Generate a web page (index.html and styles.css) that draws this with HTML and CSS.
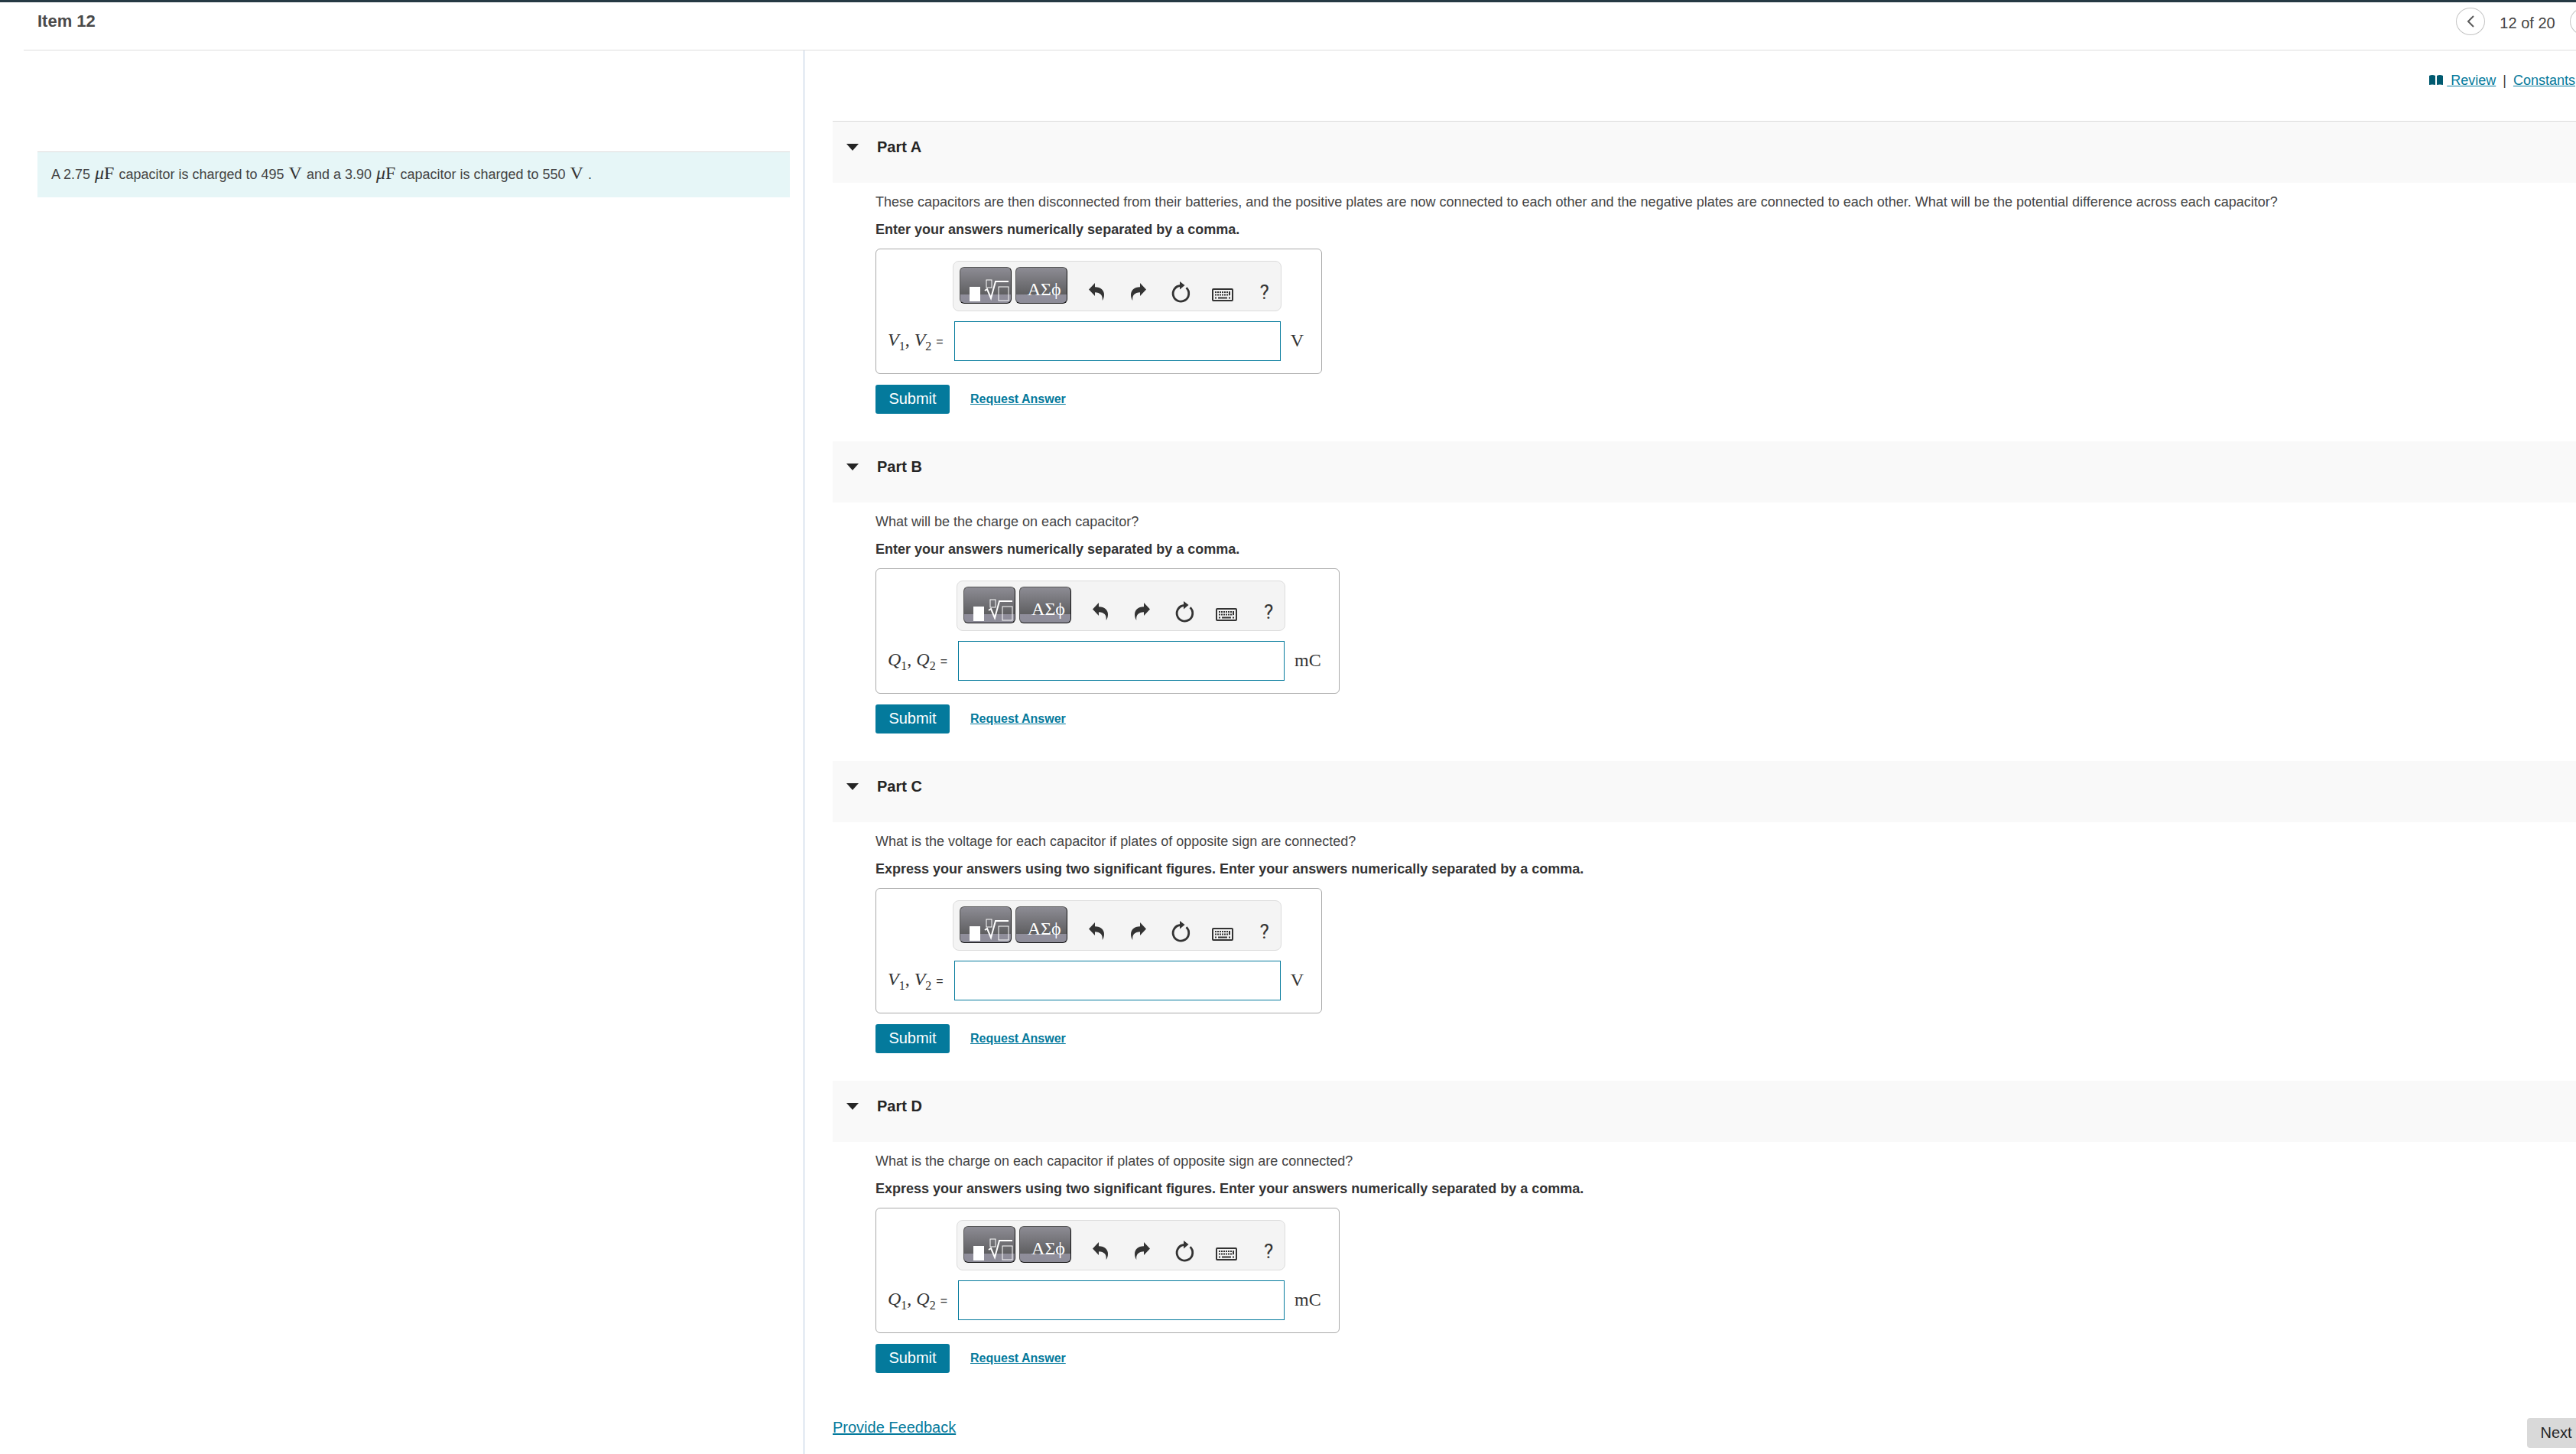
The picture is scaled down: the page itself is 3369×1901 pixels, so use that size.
FILE: index.html
```html
<!DOCTYPE html>
<html lang="en">

<head>
  <meta charset="UTF-8">
  <meta name="viewport" content="width=device-width, initial-scale=1.0">
  <title>Item 12</title>
  <link rel="stylesheet" href="styles.css">
</head>

<body>
  <!-- shared icons -->
  <svg class="sprite" aria-hidden="true">
    <symbol id="i-root" viewBox="0 0 66 46">
      <rect x="12" y="25" width="14" height="19" fill="#fff" />
      <rect x="34" y="16" width="7" height="10" fill="none" stroke="#fff" />
      <path d="M32 30l3-2 5 12 6-22h17" fill="none" stroke="#fff" stroke-width="2" />
      <rect x="50" y="25" width="13" height="18" fill="none" stroke="#fff" />
    </symbol>
    <symbol id="i-undo" viewBox="0 0 30 30">
      <path d="M5 11.500L13 3v5.200c8 0 12 4.500 12 10.200 0 3-1 5.500-2.300 7.600C23.500 19 20 15.500 13 15.300V20z" />
    </symbol>
    <symbol id="i-redo" viewBox="0 0 30 30">
      <path d="M25 11.500L17 3v5.200c-8 0-12 4.500-12 10.200 0 3 1 5.500 2.300 7.600C6.500 19 10 15.500 17 15.300V20z" />
    </symbol>
    <symbol id="i-reset" viewBox="0 0 30 30">
      <path d="M15 6.500A10.300 10.300 0 1 0 22.500 9.300" fill="none" stroke="#333" stroke-width="2.800" />
      <path d="M14 1l6.500 5-6.500 5.500z" />
    </symbol>
    <symbol id="i-keys" viewBox="0 0 30 30">
      <rect x="2" y="11" width="26" height="15" rx="1" fill="none" stroke="#333" stroke-width="2" />
      <path d="M5 15h17M5 18.500h19M5 22.500h2M23 22.500h2" fill="none" stroke="#333" stroke-width="2" stroke-dasharray="2 1" />
      <path d="M9 22.500h12M24 14v5" fill="none" stroke="#333" stroke-width="2" />
    </symbol>
  </svg>

  <div class="page">
    <header class="top">
      <h1>Item 12</h1>
      <nav class="pager">
        <button type="button" class="round" aria-label="Previous item">
          <svg width="12" height="18" viewBox="0 0 12 18"><path d="M10 2L3 9l7 7" /></svg>
        </button>
        <span class="count">12 of 20</span>
        <button type="button" class="round" aria-label="Next item">
          <svg width="12" height="18" viewBox="0 0 12 18"><path d="M2 2l7 7-7 7" /></svg>
        </button>
      </nav>
    </header>

    <div class="columns">
      <aside class="left">
        <p class="intro">A 2.75 <span class="math"><i>μ</i>F</span> capacitor is charged to 495 <span class="math">V</span> and a 3.90 <span class="math"><i>μ</i>F</span> capacitor is charged to 550 <span class="math">V</span> .</p>
      </aside>

      <main class="right">
        <div class="links">
          <svg class="book" width="18" height="14" viewBox="0 0 18 14">
            <path d="M0 1q4-2 8 0v12q-4-1-8 0zM10 1q4-2 8 0v12q-4-1-8 0z" />
          </svg>
          <a href="#">&nbsp;Review</a>
          <span class="bar">|</span>
          <a href="#">Constants</a>
        </div>

        <section class="part">
          <h2><span class="arrow"></span>Part A</h2>
          <div class="part-body">
            <p>These capacitors are then disconnected from their batteries, and the positive plates are now connected to each other and the negative plates are connected to each other. What will be the potential difference across each capacitor?</p>
            <p class="hint">Enter your answers numerically separated by a comma.</p>
            <div class="answer">
              <div class="toolbar">
                <button type="button" class="dark" aria-label="Templates"><svg><use href="#i-root" /></svg></button>
                <button type="button" class="dark greek">ΑΣϕ</button>
                <div class="tools">
                  <button type="button" aria-label="Undo"><svg><use href="#i-undo" /></svg></button>
                  <button type="button" aria-label="Redo"><svg><use href="#i-redo" /></svg></button>
                  <button type="button" aria-label="Reset"><svg><use href="#i-reset" /></svg></button>
                  <button type="button" aria-label="Keyboard shortcuts"><svg><use href="#i-keys" /></svg></button>
                  <button type="button" class="help">?</button>
                </div>
              </div>
              <label for="answer-a" class="math"><i>V</i><sub>1</sub>, <i>V</i><sub>2</sub> <span class="eq">=</span></label>
              <input type="text" id="answer-a">
              <span class="math unit">V</span>
            </div>
            <div class="actions">
              <button type="button" class="submit">Submit</button>
              <a href="#">Request Answer</a>
            </div>
          </div>
        </section>

        <section class="part">
          <h2><span class="arrow"></span>Part B</h2>
          <div class="part-body">
            <p>What will be the charge on each capacitor?</p>
            <p class="hint">Enter your answers numerically separated by a comma.</p>
            <div class="answer">
              <div class="toolbar">
                <button type="button" class="dark" aria-label="Templates"><svg><use href="#i-root" /></svg></button>
                <button type="button" class="dark greek">ΑΣϕ</button>
                <div class="tools">
                  <button type="button" aria-label="Undo"><svg><use href="#i-undo" /></svg></button>
                  <button type="button" aria-label="Redo"><svg><use href="#i-redo" /></svg></button>
                  <button type="button" aria-label="Reset"><svg><use href="#i-reset" /></svg></button>
                  <button type="button" aria-label="Keyboard shortcuts"><svg><use href="#i-keys" /></svg></button>
                  <button type="button" class="help">?</button>
                </div>
              </div>
              <label for="answer-b" class="math"><i>Q</i><sub>1</sub>, <i>Q</i><sub>2</sub> <span class="eq">=</span></label>
              <input type="text" id="answer-b">
              <span class="math unit">mC</span>
            </div>
            <div class="actions">
              <button type="button" class="submit">Submit</button>
              <a href="#">Request Answer</a>
            </div>
          </div>
        </section>

        <section class="part">
          <h2><span class="arrow"></span>Part C</h2>
          <div class="part-body">
            <p>What is the voltage for each capacitor if plates of opposite sign are connected?</p>
            <p class="hint">Express your answers using two significant figures. Enter your answers numerically separated by a comma.</p>
            <div class="answer">
              <div class="toolbar">
                <button type="button" class="dark" aria-label="Templates"><svg><use href="#i-root" /></svg></button>
                <button type="button" class="dark greek">ΑΣϕ</button>
                <div class="tools">
                  <button type="button" aria-label="Undo"><svg><use href="#i-undo" /></svg></button>
                  <button type="button" aria-label="Redo"><svg><use href="#i-redo" /></svg></button>
                  <button type="button" aria-label="Reset"><svg><use href="#i-reset" /></svg></button>
                  <button type="button" aria-label="Keyboard shortcuts"><svg><use href="#i-keys" /></svg></button>
                  <button type="button" class="help">?</button>
                </div>
              </div>
              <label for="answer-c" class="math"><i>V</i><sub>1</sub>, <i>V</i><sub>2</sub> <span class="eq">=</span></label>
              <input type="text" id="answer-c">
              <span class="math unit">V</span>
            </div>
            <div class="actions">
              <button type="button" class="submit">Submit</button>
              <a href="#">Request Answer</a>
            </div>
          </div>
        </section>

        <section class="part">
          <h2><span class="arrow"></span>Part D</h2>
          <div class="part-body">
            <p>What is the charge on each capacitor if plates of opposite sign are connected?</p>
            <p class="hint">Express your answers using two significant figures. Enter your answers numerically separated by a comma.</p>
            <div class="answer">
              <div class="toolbar">
                <button type="button" class="dark" aria-label="Templates"><svg><use href="#i-root" /></svg></button>
                <button type="button" class="dark greek">ΑΣϕ</button>
                <div class="tools">
                  <button type="button" aria-label="Undo"><svg><use href="#i-undo" /></svg></button>
                  <button type="button" aria-label="Redo"><svg><use href="#i-redo" /></svg></button>
                  <button type="button" aria-label="Reset"><svg><use href="#i-reset" /></svg></button>
                  <button type="button" aria-label="Keyboard shortcuts"><svg><use href="#i-keys" /></svg></button>
                  <button type="button" class="help">?</button>
                </div>
              </div>
              <label for="answer-d" class="math"><i>Q</i><sub>1</sub>, <i>Q</i><sub>2</sub> <span class="eq">=</span></label>
              <input type="text" id="answer-d">
              <span class="math unit">mC</span>
            </div>
            <div class="actions">
              <button type="button" class="submit">Submit</button>
              <a href="#">Request Answer</a>
            </div>
          </div>
        </section>

        <footer class="bottom">
          <a href="#">Provide Feedback</a>
          <button type="button" class="next">Next</button>
        </footer>
      </main>
    </div>
  </div>
</body>

</html>
```

FILE: styles.css
```css
* {
  box-sizing: border-box;
  margin: 0;
  padding: 0;
}

body {
  overflow: hidden;
  background-color: #fff;
  font-family: "Liberation Sans", Arial, sans-serif;
  font-size: 18px;
  color: #444;
}

button {
  border: 0;
  background: none;
  font-family: inherit;
  cursor: pointer;
}

a {
  color: #047a9c;
}

.sprite {
  display: none;
}

/* the page is a little wider than the window */
.page {
  display: flex;
  flex-direction: column;
  width: calc(100% + 30px);
  min-height: 100vh;
  border-top: 3px solid #263a44;
}

.top {
  display: flex;
  justify-content: space-between;
  height: 63px;
  margin-left: 31px;
  padding: 7px 0 0 18px;
  border-bottom: 1px solid #dedede;
}

.top h1 {
  font-size: 22px;
  line-height: 36px;
  color: #4a4a4a;
}

.pager {
  display: flex;
}

.round {
  display: flex;
  justify-content: center;
  align-items: center;
  width: 38px;
  height: 36px;
  border: 1px solid #c4c4c4;
  border-radius: 50%;
}

.round path {
  fill: none;
  stroke: #5a5a5a;
  stroke-width: 2;
}

.count {
  width: 111px;
  font-size: 20px;
  line-height: 40px;
  text-align: center;
}

.columns {
  display: flex;
  flex: 1;
}

.left {
  width: 1052px;
  flex-shrink: 0;
  padding: 132px 18px 0 49px;
  border-right: 1px solid #b8cadf;
}

.intro {
  padding: 15px 18px 16px;
  border-top: 1px solid #dcdcdc;
  background-color: #e6f6f7;
  line-height: 28px;
}

.math {
  font-family: "Liberation Serif", "Times New Roman", serif;
  font-size: 24px;
  line-height: 28px;
  color: #333;
}

.intro .math {
  margin: 0 1px;
  line-height: 20px;
}

.right {
  flex: 1;
  padding-left: 37px;
}

.links {
  display: flex;
  justify-content: flex-end;
  align-items: center;
  height: 92px;
  padding: 0 31px 14px 0;
}

.book {
  margin-right: 5px;
  fill: #005a70;
}

.bar {
  margin: 0 9px;
}

.part h2 {
  display: flex;
  align-items: center;
  height: 80px;
  padding: 0 18px 14px;
  background-color: #f9f9f9;
  font-size: 20px;
  color: #252525;
}

.links + .part h2 {
  height: 81px;
  border-top: 1px solid #dcdcdc;
}

.arrow {
  margin-right: 24px;
  border: 8px solid transparent;
  border-top: 9px solid #252525;
  border-bottom: 0;
}

.part-body {
  padding: 8px 0 36px 56px;
}

.part-body p {
  line-height: 35px;
}

.part-body .hint {
  line-height: 37px;
  font-weight: bold;
  color: #333;
}

.answer {
  display: inline-grid;
  grid-template-columns: auto 430px auto;
  grid-template-rows: 66px 52px;
  gap: 13px 12px;
  align-items: center;
  height: 164px;
  margin: 6px 0 14px;
  padding: 15px 23px 16px 15px;
  border: 1px solid #aaa;
  border-radius: 6px;
  vertical-align: top;
}

.toolbar {
  grid-column: 2;
  display: flex;
  gap: 5px;
  height: 66px;
  padding: 7px 0 0 8px;
  border: 1px solid #dcdcdc;
  border-radius: 8px;
  background-color: #f4f4f4;
}

.dark {
  width: 68px;
  height: 48px;
  border: 1px solid #555;
  border-right: 1px solid #111;
  border-bottom: 1px solid #111;
  border-radius: 6px;
  background: linear-gradient(#8d8c94, #5f5f61 76%, #908e9b 77%, #8d8c98);
}

.dark svg {
  display: block;
  width: 66px;
  height: 46px;
}

.greek {
  padding: 10px 0 0 8px;
  font-family: "Liberation Serif", "Times New Roman", serif;
  font-size: 24px;
  color: #fff;
}

.tools {
  display: flex;
  gap: 13px;
  height: 48px;
  margin-left: 12px;
}

.tools button {
  display: flex;
  justify-content: center;
  align-items: flex-end;
  width: 42px;
}

.tools svg {
  width: 30px;
  height: 30px;
  fill: #333;
}

.tools .help {
  font-family: Roboto, sans-serif;
  font-size: 26px;
  line-height: 30px;
  color: #333;
}

.answer label {
  grid-column: 1;
}

.answer .math {
  padding-bottom: 2px;
}

.answer sub {
  font-size: 16px;
  line-height: 10px;
}

.eq {
  font-family: "Liberation Sans", Arial, sans-serif;
  font-size: 16px;
}

.answer input {
  width: 427px;
  height: 52px;
  margin-left: 2px;
  padding: 0 8px;
  border: 1px solid #047a9c;
  font-size: 20px;
}

.actions {
  display: flex;
  align-items: center;
  gap: 27px;
}

.actions a {
  font-size: 16px;
  font-weight: bold;
}

.submit {
  width: 97px;
  height: 38px;
  padding-bottom: 2px;
  border-radius: 3px;
  background-color: #047a9c;
  font-size: 20px;
  color: #fff;
}

.bottom {
  display: flex;
  justify-content: space-between;
  align-items: flex-start;
  padding: 23px 18px 8px 0;
  font-size: 20px;
}

.bottom a {
  line-height: 24px;
}

.next {
  width: 76px;
  height: 39px;
  border-radius: 4px;
  background-color: #d9d9d9;
  font-size: 20px;
  color: #252525;
}
```
